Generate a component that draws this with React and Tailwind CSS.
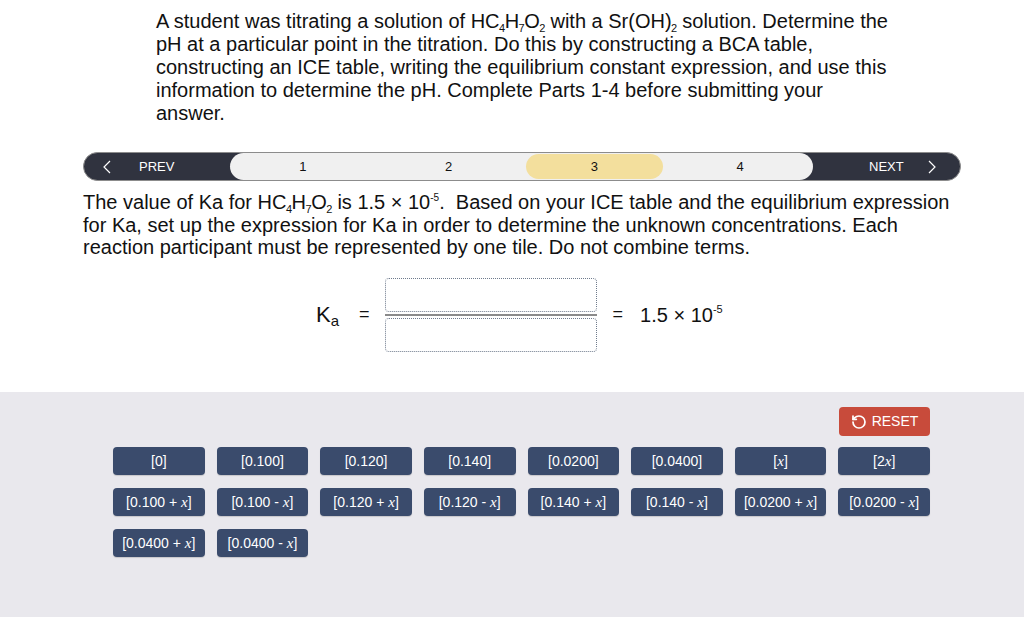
import React from "react";

const tiles = [
  "[0]", "[0.100]", "[0.120]", "[0.140]", "[0.0200]", "[0.0400]", "[x]", "[2x]",
  "[0.100 + x]", "[0.100 - x]", "[0.120 + x]", "[0.120 - x]", "[0.140 + x]", "[0.140 - x]", "[0.0200 + x]", "[0.0200 - x]",
  "[0.0400 + x]", "[0.0400 - x]",
];

function TileLabel({ text }) {
  const parts = text.split("x");
  const out = [];
  parts.forEach((p, i) => {
    out.push(p);
    if (i < parts.length - 1)
      out.push(
        <span key={"x" + i} className="font-['Liberation_Serif',serif] italic text-[15px]">
          x
        </span>
      );
  });
  return <span className="whitespace-pre">{out}</span>;
}

function Sub({ children }) {
  return <span className="relative top-[4px] text-[11px] leading-none mx-[-0.5px]">{children}</span>;
}

function Chevron({ dir }) {
  return (
    <svg width="8" height="14" viewBox="0 0 8 14" fill="none" stroke="white" strokeWidth="1.2">
      {dir === "left" ? <polyline points="7,1 1,7 7,13" /> : <polyline points="1,1 7,7 1,13" />}
    </svg>
  );
}

export default function App() {
  return (
    <div className="flex h-[617px] w-[1024px] flex-col bg-white font-['Liberation_Sans',Arial,sans-serif] text-[#111]">
      <div className="h-[392px] shrink-0">
        <p className="ml-[156px] pt-[10px] text-[20px] leading-[23px] whitespace-nowrap">
          A student was titrating a solution of HC<Sub>4</Sub>H<Sub>7</Sub>O<Sub>2</Sub> with a Sr(OH)<Sub>2</Sub> solution. Determine the
          <br />
          pH at a particular point in the titration. Do this by constructing a BCA table,
          <br />
          constructing an ICE table, writing the equilibrium constant expression, and use this
          <br />
          information to determine the pH. Complete Parts 1-4 before submitting your
          <br />
          answer.
        </p>

        <div className="ml-[83px] mt-[27px] flex h-[29px] w-[878px] items-stretch rounded-full border border-[#8c8c8c] bg-[#30333f] text-[13px]">
          <div className="flex w-[146px] items-center text-white">
            <span className="ml-[19px]"><Chevron dir="left" /></span>
            <span className="ml-[28px]">PREV</span>
          </div>
          <div className="grid flex-1 grid-cols-4 rounded-full bg-[#f0f0f0] text-[#111]">
            <div className="flex items-center justify-center">1</div>
            <div className="flex items-center justify-center">2</div>
            <div className="my-[1px] mx-[4px] flex items-center justify-center rounded-full bg-[#f3df9d]">3</div>
            <div className="flex items-center justify-center">4</div>
          </div>
          <div className="flex w-[147px] items-center text-white">
            <span className="ml-[56px]">NEXT</span>
            <span className="ml-[24px]"><Chevron dir="right" /></span>
          </div>
        </div>

        <p className="ml-[83px] mt-[10px] text-[20px] leading-[22.5px] whitespace-nowrap">
          The value of Ka for HC<Sub>4</Sub>H<Sub>7</Sub>O<Sub>2</Sub> is 1.5 × 10<span className="relative top-[-8px] text-[10px] leading-none">-5</span>.&nbsp; Based on your ICE table and the equilibrium expression
          <br />
          for Ka, set up the expression for Ka in order to determine the unknown concentrations. Each
          <br />
          reaction participant must be represented by one tile. Do not combine terms.
        </p>

        <div className="ml-[316px] mt-[19px] flex items-center">
          <span className="text-[22px] leading-none">
            K<span className="relative top-[4px] text-[15px]">a</span>
          </span>
          <span className="ml-[20px] text-[18px]">=</span>
          <div className="ml-[15px] flex w-[212px] flex-col">
            <div className="h-[34px] rounded-[4px] border border-dotted border-[#6e7a8c]"></div>
            <div className="my-[2px] h-[2px] bg-[#8a8a8a]"></div>
            <div className="h-[34px] rounded-[4px] border border-dotted border-[#6e7a8c]"></div>
          </div>
          <span className="ml-[16px] text-[18px]">=</span>
          <span className="ml-[17px] text-[20px] leading-none">
            1.5 × 10<span className="relative top-[-9px] text-[11px]">-5</span>
          </span>
        </div>
      </div>

      <div className="flex-1 bg-[#e9e8ed]">
        <div className="ml-[113px] w-[817px] pt-[15px]">
          <div className="flex justify-end">
            <button className="flex h-[29px] w-[91px] items-center justify-center gap-[5px] rounded-[4px] bg-[#c84b3b] text-[14px] text-white">
              <svg width="16" height="16" viewBox="0 0 24 24" fill="none" stroke="white" strokeWidth="2.6" strokeLinecap="round" strokeLinejoin="round">
                <path d="M3 12a9 9 0 1 0 9-9 9.75 9.75 0 0 0-6.74 2.74L3 8" />
                <path d="M3 3v5h5" />
              </svg>
              RESET
            </button>
          </div>
          <div className="mt-[11px] grid grid-cols-8 gap-x-[12px] gap-y-[13px]">
            {tiles.map((t) => (
              <div
                key={t}
                className="flex h-[28px] items-center justify-center rounded-[4px] bg-[#3a4b6c] text-[14px] text-white shadow-[0_1px_1px_rgba(0,0,0,0.15)]"
              >
                <TileLabel text={t} />
              </div>
            ))}
          </div>
        </div>
      </div>
    </div>
  );
}
